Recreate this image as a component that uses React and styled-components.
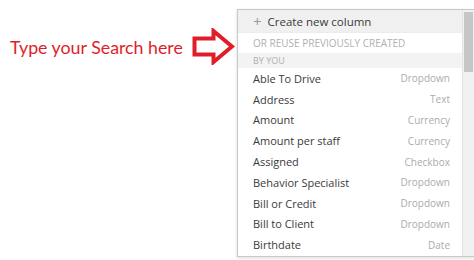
import React from 'react';
import styled, { createGlobalStyle } from 'styled-components';

const GlobalStyle = createGlobalStyle`
  html, body {
    margin: 0;
    padding: 0;
    background: #fff;
    overflow: hidden;
  }
`;

const Page = styled.div`
  width: 474px;
  height: 260px;
  display: flex;
  align-items: flex-start;
  font-family: 'Open Sans', 'Liberation Sans', sans-serif;
`;

const Hint = styled.div`
  width: 237px;
  flex-shrink: 0;
  display: flex;
  align-items: center;
  padding: 28px 0 0 10px;
  box-sizing: border-box;
`;

const HintText = styled.span`
  font-family: Lato, 'Liberation Sans', sans-serif;
  font-size: 17.8px;
  color: #e01e2a;
  white-space: nowrap;
`;

const Arrow = styled.svg`
  margin-left: 9px;
  flex-shrink: 0;
`;

const Dropdown = styled.div`
  margin-top: 9px;
  flex: 1;
  height: 246px;
  border: 1px solid #c9c9c9;
  border-right: none;
  box-shadow: 0 1px 3px rgba(0, 0, 0, 0.15);
  background: #fff;
  display: flex;
  overflow: hidden;
`;

const List = styled.div`
  flex: 1;
  display: flex;
  flex-direction: column;
`;

const CreateRow = styled.div`
  height: 22px;
  background: #f0f0f0;
  display: flex;
  align-items: center;
  padding-left: 15px;
  font-size: 11.5px;
  color: #3a3a3a;
`;

const Plus = styled.span`
  color: #999;
  font-size: 15px;
  margin-right: 6px;
  line-height: 1;
`;

const SectionRow = styled.div`
  height: ${p => p.$h}px;
  background: ${p => (p.$shade ? '#f3f3f3' : '#fff')};
  border-top: ${p => (p.$shade ? 'none' : '1px solid #ececec')};
  display: flex;
  align-items: center;
  padding-left: 15px;
  font-size: ${p => p.$size}px;
  color: #b0b0b0;
  text-transform: uppercase;
  box-sizing: border-box;
`;

const Item = styled.div`
  height: 20.8px;
  flex-shrink: 0;
  display: flex;
  align-items: center;
  justify-content: space-between;
  padding: 0 12px 0 15px;
  font-size: 11px;
  color: #3a3a3a;
`;

const Type = styled.span`
  font-size: 10px;
  color: #ababab;
`;

const ScrollTrack = styled.div`
  width: 11px;
  background: #f1f1f1;
  border-left: 1px solid #e4e4e4;
  position: relative;
`;

const Thumb = styled.div`
  position: absolute;
  top: 2px;
  left: 1px;
  right: 1px;
  height: 60px;
  background: #c6c6c6;
`;

const items = [
  ['Able To Drive', 'Dropdown'],
  ['Address', 'Text'],
  ['Amount', 'Currency'],
  ['Amount per staff', 'Currency'],
  ['Assigned', 'Checkbox'],
  ['Behavior Specialist', 'Dropdown'],
  ['Bill or Credit', 'Dropdown'],
  ['Bill to Client', 'Dropdown'],
  ['Birthdate', 'Date'],
];

const App = () => (
  <Page>
    <GlobalStyle />
    <Hint>
      <HintText>Type your Search here</HintText>
      <Arrow width="43" height="37" viewBox="0 0 43 37">
        <path
          d="M2.5 10.5 H21.5 V3 L40 18.5 L21.5 34 V26.5 H2.5 Z"
          fill="none"
          stroke="#e01e2a"
          strokeWidth="4"
          strokeLinejoin="miter"
        />
      </Arrow>
    </Hint>
    <Dropdown>
      <List>
        <CreateRow>
          <Plus>+</Plus>Create new column
        </CreateRow>
        <SectionRow $h={21} $size={10}>Or reuse previously created</SectionRow>
        <SectionRow $h={15} $size={9} $shade>By you</SectionRow>
        {items.map(([name, type]) => (
          <Item key={name}>
            <span>{name}</span>
            <Type>{type}</Type>
          </Item>
        ))}
      </List>
      <ScrollTrack>
        <Thumb />
      </ScrollTrack>
    </Dropdown>
  </Page>
);

export default App;
